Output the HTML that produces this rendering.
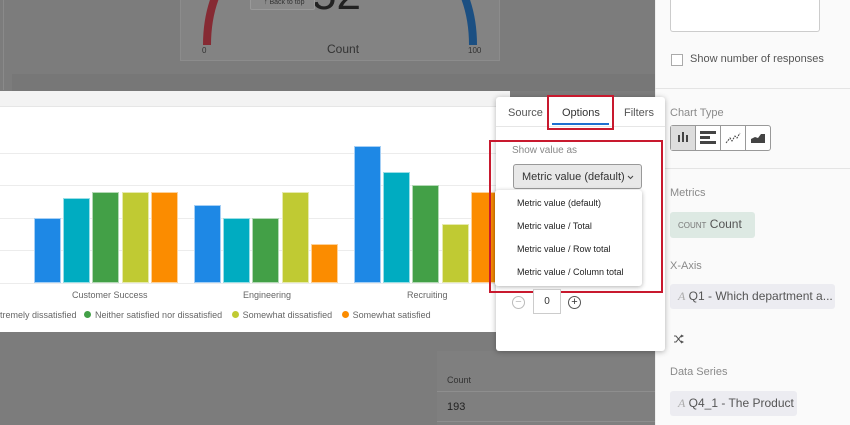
<!DOCTYPE html>
<html><head><style>
*{margin:0;padding:0;box-sizing:border-box}
body{width:850px;height:425px;overflow:hidden;position:relative;background:#7c7c7c;font-family:"Liberation Sans",sans-serif}
.a{position:absolute}
.t{position:absolute;white-space:nowrap}
.bar{position:absolute;border:1px solid rgba(255,255,255,.6)}
.B{background:#1e88e5}.C{background:#00acc1}.G{background:#43a047}.L{background:#c0ca33}.O{background:#fb8c00}
.gl{position:absolute;left:0;width:500px;height:1px;background:#ececec}
.lbl{font-size:11px;color:#8a8a8a}
.pill{position:absolute;border-radius:3px;font-size:12px;color:#555;padding-left:8px;line-height:25px}
</style></head><body>
<!-- gauge card -->
<div class="a" style="left:180px;top:0;width:320px;height:61px;background:#838383;border:1px solid #8c8c8c;border-top:none"></div>
<svg class="a" style="left:180px;top:0" width="320" height="61"><path d="M27 45 C27 25 30 10 36 -5" fill="none" stroke="#862a33" stroke-width="8"/><path d="M293 45 C293 25 290 10 284 -5" fill="none" stroke="#1b4f82" stroke-width="8"/></svg>
<div class="t" style="left:202px;top:46px;font-size:8px;color:#333">0</div>
<div class="t" style="left:468px;top:46px;font-size:8px;color:#333">100</div>
<div class="t" style="left:327px;top:42px;font-size:12px;color:#333">Count</div>
<div class="t" style="left:312px;top:-30px;font-size:44px;color:#222">52</div>
<div class="a" style="left:250px;top:0;width:65px;height:10px;background:#8a8a8a;border:1px solid #999;border-top:none;border-radius:0 0 2px 2px"></div>
<div class="t" style="left:264px;top:-1px;font-size:7px;color:#333">↑ Back to top</div>
<div class="a" style="left:3px;top:0;width:1px;height:90px;background:#8a8a8a"></div>
<div class="a" style="left:12px;top:74px;width:643px;height:17px;background:#777"></div>
<!-- chart panel -->
<div class="a" style="left:0;top:91px;width:510px;height:241px;background:#fff"></div>
<div class="a" style="left:0;top:91px;width:510px;height:16px;background:#f3f3f3;border-bottom:1px solid #e6e6e6"></div>
<div class="gl" style="top:153px"></div><div class="gl" style="top:185px"></div><div class="gl" style="top:218px"></div><div class="gl" style="top:250px"></div><div class="gl" style="top:283px"></div>
<div class="bar B" style="left:34px;top:218px;width:27px;height:65px"></div>
<div class="bar C" style="left:63px;top:198px;width:27px;height:85px"></div>
<div class="bar G" style="left:92px;top:192px;width:27px;height:91px"></div>
<div class="bar L" style="left:122px;top:192px;width:27px;height:91px"></div>
<div class="bar O" style="left:151px;top:192px;width:27px;height:91px"></div>
<div class="bar B" style="left:194px;top:205px;width:27px;height:78px"></div>
<div class="bar C" style="left:223px;top:218px;width:27px;height:65px"></div>
<div class="bar G" style="left:252px;top:218px;width:27px;height:65px"></div>
<div class="bar L" style="left:282px;top:192px;width:27px;height:91px"></div>
<div class="bar O" style="left:311px;top:244px;width:27px;height:39px"></div>
<div class="bar B" style="left:354px;top:146px;width:27px;height:137px"></div>
<div class="bar C" style="left:383px;top:172px;width:27px;height:111px"></div>
<div class="bar G" style="left:412px;top:185px;width:27px;height:98px"></div>
<div class="bar L" style="left:442px;top:224px;width:27px;height:59px"></div>
<div class="bar O" style="left:471px;top:192px;width:27px;height:91px"></div>
<div class="t" style="left:72px;top:290px;font-size:9px;color:#666">Customer Success</div>
<div class="t" style="left:243px;top:290px;font-size:9px;color:#666">Engineering</div>
<div class="t" style="left:407px;top:290px;font-size:9px;color:#666">Recruiting</div>
<div class="t" style="left:0;top:310px;font-size:9px;color:#666">tremely dissatisfied
<span style="display:inline-block;width:7px;height:7px;border-radius:50%;background:#43a047;margin:0 4px 0 5px"></span>Neither satisfied nor dissatisfied
<span style="display:inline-block;width:7px;height:7px;border-radius:50%;background:#c0ca33;margin:0 4px 0 7px"></span>Somewhat dissatisfied
<span style="display:inline-block;width:7px;height:7px;border-radius:50%;background:#fb8c00;margin:0 4px 0 7px"></span>Somewhat satisfied</div>
<!-- bottom table -->
<div class="a" style="left:437px;top:351px;width:218px;height:74px;background:#7f7f7f"></div>
<div class="t" style="left:447px;top:375px;font-size:9px;color:#333">Count</div>
<div class="a" style="left:437px;top:391px;width:218px;height:1px;background:#8e8e8e"></div>
<div class="t" style="left:447px;top:401px;font-size:11px;color:#222">193</div>
<div class="a" style="left:437px;top:421px;width:218px;height:1px;background:#8e8e8e"></div>
<!-- right panel -->
<div class="a" style="left:655px;top:0;width:195px;height:425px;background:#fafafa;border-left:1px solid #eee"></div>
<div class="a" style="left:670px;top:0;width:150px;height:32px;background:#fff;border:1px solid #ccc;border-top:none;border-radius:0 0 3px 3px"></div>
<div class="a" style="left:671px;top:54px;width:12px;height:12px;border:1px solid #aaa;background:#fff"></div>
<div class="t" style="left:690px;top:53px;font-size:11px;color:#555">Show number of responses</div>
<div class="a" style="left:655px;top:88px;width:195px;height:1px;background:#e4e4e4"></div>
<div class="t lbl" style="left:670px;top:107px">Chart Type</div>
<div class="a" style="left:670px;top:125px;width:101px;height:26px;border:1px solid #999;border-radius:3px;background:#fff;display:flex">
<div style="width:25px;background:#ddd;border-right:1px solid #999;position:relative"><div class="a" style="left:7px;top:9px;width:2px;height:7px;background:#444"></div><div class="a" style="left:11px;top:6px;width:2px;height:10px;background:#444"></div><div class="a" style="left:15px;top:9px;width:2px;height:7px;background:#444"></div></div>
<div style="width:25px;border-right:1px solid #999;position:relative"><div class="a" style="left:4px;top:5px;width:16px;height:3px;background:#444"></div><div class="a" style="left:4px;top:10px;width:10px;height:3px;background:#444"></div><div class="a" style="left:4px;top:15px;width:16px;height:3px;background:#444"></div></div>
<div style="width:25px;border-right:1px solid #999;position:relative"><svg class="a" style="left:4px;top:5px" width="16" height="14"><path d="M1 12 L5 7 L7 10 L10 5 L12 7 L15 2" fill="none" stroke="#444" stroke-dasharray="2 1"/></svg></div>
<div style="width:24px;position:relative"><svg class="a" style="left:4px;top:6px" width="16" height="12"><path d="M1 11 L1 7 L5 5 L8 6 L11 2 L15 2 L15 11Z" fill="#444"/></svg></div>
</div>
<div class="a" style="left:655px;top:168px;width:195px;height:1px;background:#e4e4e4"></div>
<div class="t lbl" style="left:670px;top:187px">Metrics</div>
<div class="pill" style="left:670px;top:212px;width:85px;background:#dde9e3"><span style="font-size:8px;color:#777">COUNT</span> Count</div>
<div class="t lbl" style="left:670px;top:260px">X-Axis</div>
<div class="pill" style="left:670px;top:284px;width:165px;background:#ececf1"><i style="font-family:'Liberation Serif';color:#aaa">A</i> Q1 - Which department a...</div>
<svg class="a" style="left:673px;top:334px" width="11" height="10"><path d="M1 2h2l5 6h2M1 8h2l5-6h2M8 1l2 1-2 1M8 7l2 1-2 1" fill="none" stroke="#555" stroke-width="1"/></svg>
<div class="t lbl" style="left:670px;top:366px">Data Series</div>
<div class="pill" style="left:670px;top:391px;width:127px;background:#ececf1"><i style="font-family:'Liberation Serif';color:#aaa">A</i> Q4_1 - The Product</div>
<!-- popup -->
<div class="a" style="left:496px;top:97px;width:169px;height:254px;background:#fff;border-radius:3px;box-shadow:0 1px 6px rgba(0,0,0,.3)"></div>
<div class="a" style="left:496px;top:126px;width:169px;height:1px;background:#e6e6e6"></div>
<div class="t" style="left:508px;top:107px;font-size:11px;color:#555">Source</div>
<div class="t" style="left:562px;top:107px;font-size:11px;color:#333">Options</div>
<div class="t" style="left:624px;top:107px;font-size:11px;color:#555">Filters</div>
<div class="a" style="left:552px;top:123px;width:57px;height:2px;background:#1e6fd0"></div>
<div class="a" style="left:547px;top:95px;width:67px;height:35px;border:2px solid #c8192e"></div>
<div class="t" style="left:512px;top:145px;font-size:10px;color:#888">Show value as</div>
<div class="a" style="left:513px;top:164px;width:129px;height:25px;background:#e8e8e8;border:1px solid #999;border-radius:3px"></div>
<div class="t" style="left:522px;top:171px;font-size:11px;color:#333">Metric value (default)</div>
<svg class="a" style="left:627px;top:175px" width="7" height="5"><path d="M1 1l2.5 2.5L6 1" fill="none" stroke="#444"/></svg>
<div class="a" style="left:495px;top:190px;width:147px;height:96px;background:#fff;border-radius:3px;box-shadow:0 1px 5px rgba(0,0,0,.3)"></div>
<div class="t" style="left:517px;top:198px;font-size:9px;color:#222">Metric value (default)</div>
<div class="t" style="left:517px;top:221px;font-size:9px;color:#222">Metric value / Total</div>
<div class="t" style="left:517px;top:244px;font-size:9px;color:#222">Metric value / Row total</div>
<div class="t" style="left:517px;top:267px;font-size:9px;color:#222">Metric value / Column total</div>
<div class="a" style="left:489px;top:140px;width:174px;height:153px;border:2px solid #c8192e"></div>
<div class="a" style="left:512px;top:296px;width:13px;height:13px;border:1px solid #bbb;border-radius:50%;color:#bbb;font-size:11px;line-height:10px;text-align:center">−</div>
<div class="a" style="left:533px;top:289px;width:28px;height:25px;border:1px solid #ccc;background:#fff;font-size:10px;line-height:23px;text-align:center;color:#333">0</div>
<div class="a" style="left:568px;top:296px;width:13px;height:13px;border:1px solid #555;border-radius:50%;color:#333;font-size:11px;line-height:10px;text-align:center">+</div>
</body></html>
